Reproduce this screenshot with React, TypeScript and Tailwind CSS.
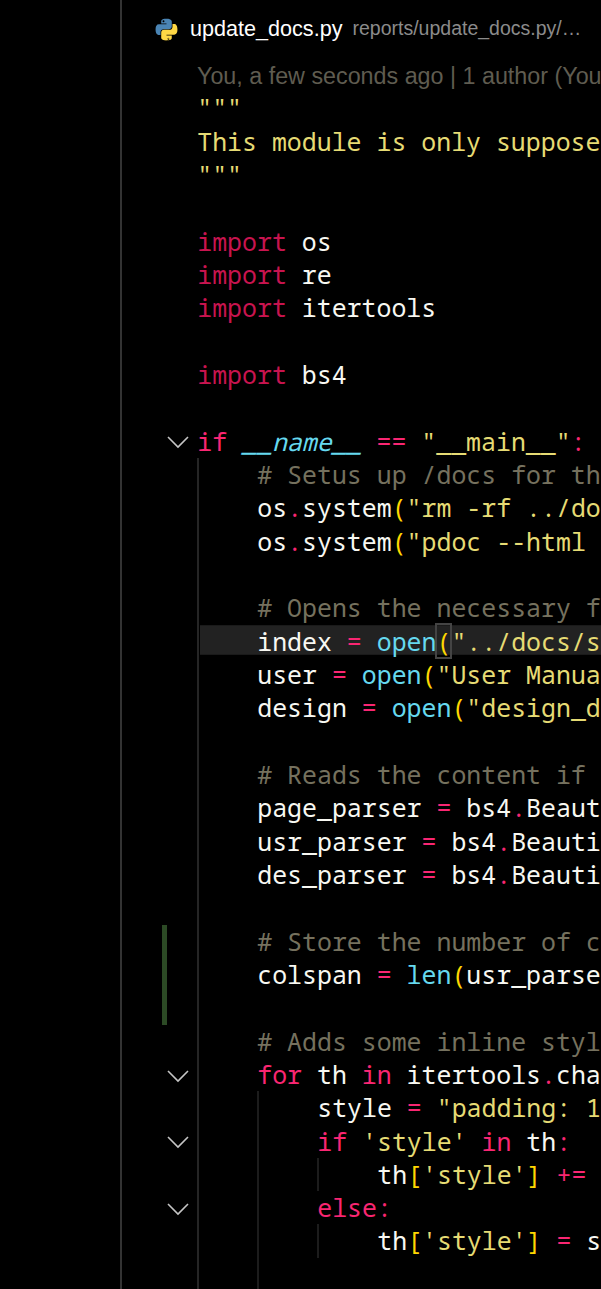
type Tok = [string, string?];

const KW = "text-[#f92672]";
const IMP = "text-[#c8144f]";
const STR = "text-[#e6db74]";
const COM = "text-[#75715e]";
const FN = "text-[#66d9ef]";
const BR = "text-[#ffd700]";

type LineProps = { indent?: number; fold?: boolean; git?: boolean; active?: boolean; guides?: number; toks?: Tok[] };

const Chevron = () => (
  <svg width="24" height="14" viewBox="0 0 24 14" fill="none" stroke="#c5c5c5" strokeWidth="1.6">
    <path d="M2 2l10 10L22 2" />
  </svg>
);

const lines: LineProps[] = [
  { toks: [['"""', STR]] },
  { toks: [["This module is only supposed to be run from the reports folder", STR]] },
  { toks: [['"""', STR]] },
  {},
  { toks: [["import", IMP], [" os"]] },
  { toks: [["import", IMP], [" re"]] },
  { toks: [["import", IMP], [" itertools"]] },
  {},
  { toks: [["import", IMP], [" bs4"]] },
  {},
  {
    fold: true,
    toks: [["if", KW], [" "], ["__name__", `${FN} italic`], [" "], ["==", KW], [" "], ['"__main__"', STR], [":", KW]],
  },
  { guides: 1, indent: 1, toks: [["# Setus up /docs for the website", COM]] },
  { guides: 1, indent: 1, toks: [["os"], [".", KW], ["system"], ["(", BR], ['"rm -rf ../docs"', STR]] },
  { guides: 1, indent: 1, toks: [["os"], [".", KW], ["system"], ["(", BR], ['"pdoc --html reports"', STR]] },
  { guides: 1 },
  { guides: 1, indent: 1, toks: [["# Opens the necessary files", COM]] },
  { guides: 1, indent: 1, active: true, toks: [["index "], ["=", KW], [" "], ["open", FN], ["(", BR], ['"../docs/site/index.html"', STR]] },
  { guides: 1, indent: 1, toks: [["user "], ["=", KW], [" "], ["open", FN], ["(", BR], ['"User Manual.html"', STR]] },
  { guides: 1, indent: 1, toks: [["design "], ["=", KW], [" "], ["open", FN], ["(", BR], ['"design_doc.html"', STR]] },
  { guides: 1 },
  { guides: 1, indent: 1, toks: [["# Reads the content if the files", COM]] },
  { guides: 1, indent: 1, toks: [["page_parser "], ["=", KW], [" bs4"], [".", KW], ["BeautifulSoup"]] },
  { guides: 1, indent: 1, toks: [["usr_parser "], ["=", KW], [" bs4"], [".", KW], ["BeautifulSoup"]] },
  { guides: 1, indent: 1, toks: [["des_parser "], ["=", KW], [" bs4"], [".", KW], ["BeautifulSoup"]] },
  { guides: 1 },
  { guides: 1, indent: 1, git: true, toks: [["# Store the number of columns", COM]] },
  { guides: 1, indent: 1, git: true, toks: [["colspan "], ["=", KW], [" "], ["len", FN], ["(", BR], ["usr_parser"]] },
  { guides: 1, git: true },
  { guides: 1, indent: 1, toks: [["# Adds some inline styles", COM]] },
  { guides: 1, indent: 1, fold: true, toks: [["for", KW], [" th "], ["in", KW], [" itertools"], [".", KW], ["chain"]] },
  { guides: 2, indent: 2, toks: [["style "], ["=", KW], [" "], ['"padding: 10px"', STR]] },
  { guides: 2, indent: 2, fold: true, toks: [["if", KW], [" "], ["'style'", STR], [" "], ["in", KW], [" th"], [":", KW]] },
  { guides: 3, indent: 3, toks: [["th"], ["[", BR], ["'style'", STR], ["]", BR], [" "], ["+=", KW], [" style"]] },
  { guides: 2, indent: 2, fold: true, toks: [["else", KW], [":", KW]] },
  { guides: 3, indent: 3, toks: [["th"], ["[", BR], ["'style'", STR], ["]", BR], [" "], ["=", KW], [" style"]] },
  { guides: 2 },
];

function Line({ fold, git, active, guides = 0, toks = [] }: LineProps) {
  return (
    <div className="relative flex h-[33.33px]">
      {/* current line highlight sits behind the text */}
      {active ? <div className="absolute left-[78px] right-0 top-0 h-[30px] border-y border-[#1a1a1a] bg-[#222222]" /> : null}
      <div className="flex w-[75.25px] shrink-0 items-center">
        <div className={`ml-[40px] h-full w-[5px] ${git ? "bg-[#2c4a25]" : ""}`} />
        <div className="ml-[-1px] mt-[2px] flex">{fold ? <Chevron /> : null}</div>
      </div>
      {Array.from({ length: guides }).map((_, i) => (
        <div key={i} className={`relative h-full w-[60px] shrink-0 border-l-2 ${i === 0 ? "border-[#252525]" : "border-[#1c1c1c]"}`} />
      ))}
      <div className="relative flex-1 whitespace-pre leading-[32.12px] text-[#f8f8f2]">
        {toks.map((t, i) =>
          active && t[0] === "(" ? (
            <span key={i} className={`${t[1]} outline-2 outline-[#444444] outline-offset-[-1px]`}>
              {t[0]}
            </span>
          ) : (
            <span key={i} className={t[1]}>
              {t[0]}
            </span>
          ),
        )}
      </div>
    </div>
  );
}

export default function App() {
  return (
    <div className="flex h-[1289px] w-[601px] overflow-hidden bg-black">
      <div className="h-full w-[122px] shrink-0 border-r-2 border-[#333333]" />
      <div className="min-w-0 flex-1">
        <header className="flex h-[58px] items-center pl-[32px] font-['Liberation_Sans',sans-serif]">
          <svg width="25" height="25" viewBox="0 0 32 32" className="shrink-0">
            <path
              fill="#4a84b4"
              d="M15.885 2.1c-7.1 0-6.651 3.07-6.651 3.07v3.19h6.752v1H6.545S2 8.8 2 16.005s4.013 6.912 4.013 6.912H8.33v-3.361s-.13-4.013 3.9-4.013h6.762s3.772.06 3.772-3.652V5.8s.572-3.712-6.842-3.712Zm-3.732 2.137a1.214 1.214 0 1 1-1.183 1.213a1.2 1.2 0 0 1 1.183-1.213Z"
            />
            <path
              fill="#ffd845"
              d="M16.085 29.91c7.1 0 6.651-3.08 6.651-3.08v-3.18h-6.751v-1h9.441s4.574.53 4.574-6.67s-4.013-6.922-4.013-6.922h-2.331v3.341s.13 4.013-3.9 4.013h-6.762s-3.772-.06-3.772 3.652v6.214s-.572 3.642 6.863 3.642Zm3.732-2.147a1.214 1.214 0 1 1-1.183-1.214a1.2 1.2 0 0 1-1.183 1.214Z"
            />
          </svg>
          <span className="ml-[11px] text-[21.6px] text-white">update_docs.py</span>
          <span className="ml-[10px] text-[19.5px] text-[#8b8b8b]">reports/update_docs.py/…</span>
        </header>
        <div className="flex h-[33.33px] items-center whitespace-pre pl-[75px] pt-[4px] font-['Liberation_Sans',sans-serif] text-[23.3px] text-[#5f5c50]">
          You, a few seconds ago | 1 author (You)
        </div>
        <div className="font-['Noto_Sans_Mono','DejaVu_Sans_Mono',monospace] text-[24.9px]">
          {lines.map((l, i) => (
            <Line key={i} {...l} />
          ))}
        </div>
      </div>
    </div>
  );
}
